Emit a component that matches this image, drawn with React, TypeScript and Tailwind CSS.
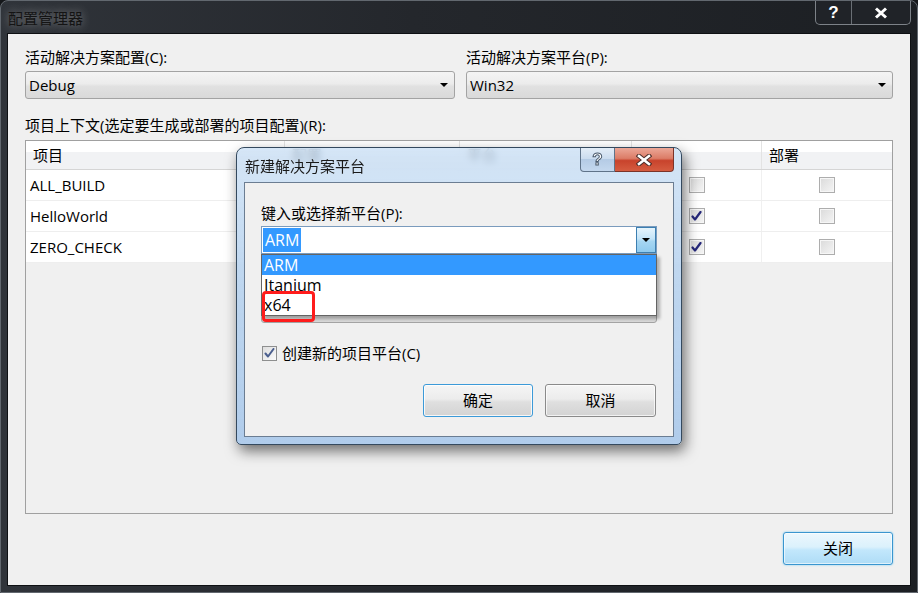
import clsx from "clsx";

const rows = [
  { name: "ALL_BUILD", build: false },
  { name: "HelloWorld", build: true },
  { name: "ZERO_CHECK", build: true },
];

const gridCols = "grid grid-cols-[259px_175px_172px_130px_1fr]";

function Caret() {
  return (
    <svg width="8" height="4" viewBox="0 0 8 4" className="shrink-0">
      <path d="M0 0h8L4 4z" fill="#000" />
    </svg>
  );
}

function Combo({ value, className }: { value?: string; className?: string }) {
  return (
    <div
      className={clsx(
        "flex h-[28px] items-center justify-between rounded-[3px] border border-[#a3a3a3] bg-[linear-gradient(to_bottom,#f4f4f4,#ececec_45%,#e1e1e1_55%,#d9d9d9)] pl-[3px] pr-[6px] text-[15px]",
        className,
      )}
    >
      <span>{value}</span>
      <Caret />
    </div>
  );
}

function GridCheck({ checked = false }: { checked?: boolean }) {
  return (
    <span className="flex h-[16px] w-[16px] items-center justify-center border border-[#adadad] bg-[#f6f6f6]">
      <span className="flex h-[12px] w-[12px] items-center justify-center bg-[linear-gradient(135deg,#dcdcdc,#f3f3f3)]">
        {checked && (
          <svg width="11" height="10" viewBox="0 0 11 10">
            <path
              d="M1.5 5.5 4 8.5 9.5 1"
              fill="none"
              stroke="#26287a"
              strokeWidth="2.2"
              strokeLinecap="round"
              strokeLinejoin="round"
            />
          </svg>
        )}
      </span>
    </span>
  );
}

function Check() {
  return (
    <span className="flex h-[15px] w-[15px] items-center justify-center border border-[#8e8f8f] bg-[linear-gradient(135deg,#dedede,#fbfbfb)]">
      <svg width="11" height="10" viewBox="0 0 11 10">
        <path
          d="M1.5 5.5 4 8.5 9.5 1"
          fill="none"
          stroke="#4b5f8e"
          strokeWidth="2"
          strokeLinecap="round"
          strokeLinejoin="round"
        />
      </svg>
    </span>
  );
}

function ProjectGrid() {
  return (
    <div className="mt-[5px] flex h-[374px] w-[868px] flex-col border border-[#a0a0a0] bg-[#f0f0f0]">
      <div
        className={clsx(
          gridCols,
          "h-[29px] border-b border-[#d5d5d5] bg-[linear-gradient(to_bottom,#ffffff_38%,#f1f2f4_38%)]",
        )}
      >
        {["项目", "配置", "平台", "生成", "部署"].map((h, i) => (
          <div
            key={h}
            className={clsx(
              "flex items-center pl-[7px]",
              i < 4 && "border-r border-[#e3e3e3]",
            )}
          >
            {h}
          </div>
        ))}
      </div>
      {rows.map((r) => (
        <div
          key={r.name}
          className={clsx(gridCols, "h-[31px] border-b border-[#eeeeee] bg-white")}
        >
          <div className="flex items-center border-r border-[#f0f0f0] pl-[4px]">{r.name}</div>
          <div className="border-r border-[#f0f0f0]" />
          <div className="border-r border-[#f0f0f0]" />
          <div className="flex items-center justify-center border-r border-[#f0f0f0]">
            <GridCheck checked={r.build} />
          </div>
          <div className="flex items-center justify-center">
            <GridCheck />
          </div>
        </div>
      ))}
    </div>
  );
}

function NewPlatformDialog() {
  return (
    <div className="absolute left-[236px] top-[147px] flex h-[298px] w-[446px] flex-col rounded-t-[8px] rounded-b-[5px] border border-[#34495e] bg-[linear-gradient(to_bottom,rgba(205,225,245,0.82),rgba(186,212,239,0.9)_40%,#b0cceb)] px-[7px] pb-[7px] shadow-[3px_6px_14px_rgba(0,0,0,0.55)] backdrop-blur-[3px]">
      <div className="flex h-[34px] items-start justify-between">
        <span className="mt-[9px] pl-[1px] leading-[18px] text-[#1a1a1a]">新建解决方案平台</span>
        <div className="flex h-[24px]">
          <div className="flex w-[35px] items-center justify-center rounded-bl-[4px] border border-t-0 border-[#5f7389] bg-[linear-gradient(to_bottom,#e3edf7,#c9dbee_50%,#b4cbe5_50%,#c4d8ee)] font-['Liberation_Sans',sans-serif] text-[17px] font-bold leading-none text-white [-webkit-text-stroke:1px_#4a5a6c]">
            ?
          </div>
          <div className="flex w-[59px] items-center justify-center rounded-br-[4px] border border-l-0 border-t-0 border-[#7c3328] bg-[linear-gradient(to_bottom,#eba797,#dc7c67_45%,#c8432c_55%,#d55c40)]">
            <svg width="16" height="12" viewBox="0 0 16 12">
              <path d="M3 2 13 10M13 2 3 10" stroke="#4a2e2a" strokeWidth="4.6" strokeLinecap="square" />
              <path d="M3 2 13 10M13 2 3 10" stroke="#fff" strokeWidth="2.6" strokeLinecap="square" />
            </svg>
          </div>
        </div>
      </div>

      <div className="flex-1 border border-[#6b7d92] bg-[#f0f0f0] px-[16px] pt-[20px]">
        <div className="h-[20px] leading-[20px]">键入或选择新平台(P):</div>

        <div className="relative mt-[3px]">
          <div className="flex h-[28px] items-center border border-[#7a9bbd] bg-white">
            <div className="flex-1 pl-[1px]">
              <span className="inline-block h-[24px] bg-[#3399ff] px-[2px] text-[16px] leading-[24px] text-white">
                ARM
              </span>
            </div>
            <div className="flex h-full w-[20px] items-center justify-center border border-[#3c7fb1] bg-[linear-gradient(to_bottom,#e6f4fc,#c4e4f8_45%,#a6d6f2_55%,#8fcaee)]">
              <Caret />
            </div>
          </div>

          {/* open drop-down list of platforms */}
          <div className="absolute left-0 top-full z-10 w-full border border-[#646464] bg-white text-[16px] shadow-[3px_3px_3px_rgba(0,0,0,0.28)]">
            <div className="h-[20px] bg-[#3399ff] pl-[2px] leading-[20px] text-white">ARM</div>
            <div className="h-[20px] pl-[2px] leading-[20px]">Itanium</div>
            <div className="h-[20px] pl-[2px] leading-[20px]">x64</div>
            <div className="absolute left-0 top-[36px] h-[31px] w-[53px] rounded-[4px] border-[3px] border-[#ff1c1c]" />
          </div>
        </div>

        {/* copy-settings row, covered by the open list */}
        <div className="mt-[11px] h-[20px]" />
        <Combo className="mt-[10px] w-full" />

        <label className="mt-[20px] flex h-[20px] items-center gap-[5px] pl-[1px]">
          <Check />
          <span>创建新的项目平台(C)</span>
        </label>

        <div className="mt-[21px] flex justify-end gap-[12px] pr-[1px]">
          <button className="h-[33px] w-[110px] rounded-[3px] border border-[#3c9ad8] bg-[linear-gradient(to_bottom,#f5f5f5,#ececec_45%,#dfdfdf_55%,#d3d3d3)] shadow-[inset_0_0_0_1px_rgba(255,255,255,0.8)]">
            确定
          </button>
          <button className="h-[33px] w-[111px] rounded-[3px] border border-[#8a8a8a] bg-[linear-gradient(to_bottom,#f5f5f5,#ececec_45%,#dfdfdf_55%,#d3d3d3)] shadow-[inset_0_0_0_1px_rgba(255,255,255,0.7)]">
            取消
          </button>
        </div>
      </div>
    </div>
  );
}

export default function App() {
  return (
    <div className="relative h-[593px] w-[918px] overflow-hidden bg-[#15171a] font-['Open_Sans','Noto_Sans_CJK_SC',sans-serif] text-[15px] text-black">
      <div className="flex h-full w-full flex-col rounded-t-[8px] border border-[#62686f] bg-[linear-gradient(to_right,#30343a,#24272c_45%,#1c1f23)]">
        <div className="flex h-[32px] items-start justify-between pl-[7px] pr-[6px]">
          <span className="mt-[7px] leading-[20px] text-[#141414] [text-shadow:0_0_10px_rgba(255,255,255,0.45)]">
            配置管理器
          </span>
          <div className="flex h-[24px] rounded-b-[5px] border border-t-0 border-[#7d8288] bg-[#202328]">
            <div className="flex w-[35px] items-center justify-center font-['Liberation_Sans',sans-serif] text-[17px] font-bold text-white">
              ?
            </div>
            <div className="flex w-[59px] items-center justify-center border-l border-[#6a6f75]">
              <svg width="14" height="12" viewBox="0 0 14 12">
                <path d="M2 1.5 12 10.5M12 1.5 2 10.5" stroke="#fff" strokeWidth="3" />
              </svg>
            </div>
          </div>
        </div>

        <div className="mx-[6px] mb-[6px] flex flex-1 flex-col border border-[#0e1013] bg-[#f0f0f0] pl-[17px] pt-[13px]">
          <div className="flex gap-[11px]">
            <div className="w-[430px]">
              <div className="h-[20px] leading-[20px]">活动解决方案配置(C):</div>
              <Combo value="Debug" className="mt-[4px]" />
            </div>
            <div className="w-[427px]">
              <div className="h-[20px] leading-[20px]">活动解决方案平台(P):</div>
              <Combo value="Win32" className="mt-[4px]" />
            </div>
          </div>

          <div className="mt-[16px] h-[20px] leading-[20px]">项目上下文(选定要生成或部署的项目配置)(R):</div>
          <ProjectGrid />

          <div className="mt-[18px] flex justify-end pr-[17px]">
            <button className="h-[33px] w-[110px] rounded-[3px] border border-[#3a95cf] bg-[linear-gradient(to_bottom,#ecf7fd,#dbf1fc_45%,#c2e7fc_55%,#aedcf6)] shadow-[0_0_2px_#6cc8f4,inset_0_0_0_1px_rgba(255,255,255,0.6)]">
              关闭
            </button>
          </div>
        </div>
      </div>

      <NewPlatformDialog />
    </div>
  );
}
